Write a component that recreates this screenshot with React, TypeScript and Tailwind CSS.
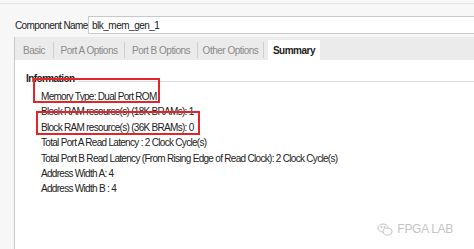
import React from "react";

const lines = [
  "Memory Type: Dual Port ROM",
  "Block RAM resource(s) (18K BRAMs): 1",
  "Block RAM resource(s) (36K BRAMs): 0",
  "Total Port A Read Latency : 2 Clock Cycle(s)",
  "Total Port B Read Latency (From Rising Edge of Read Clock): 2 Clock Cycle(s)",
  "Address Width A: 4",
  "Address Width B : 4",
];

const tabs = [
  { label: "Basic", w: "w-[39px]" },
  { label: "Port A Options", w: "w-[71px]" },
  { label: "Port B Options", w: "w-[73px]" },
  { label: "Other Options", w: "w-[66px]" },
];

function WatermarkIcon() {
  return (
    <svg width="16" height="13" viewBox="0 0 16 13" fill="none" stroke="#c4c4c4" strokeWidth="1">
      <ellipse cx="6" cy="5" rx="5" ry="4" />
      <ellipse cx="10.5" cy="8.5" rx="4.5" ry="3.5" fill="#fff" />
      <circle cx="4.5" cy="4" r="0.6" fill="#c4c4c4" />
      <circle cx="7.5" cy="4" r="0.6" fill="#c4c4c4" />
    </svg>
  );
}

export default function App() {
  return (
    <div
      className="w-[474px] h-[249px] overflow-hidden bg-[#f7f7f7] relative text-[#222]"
      style={{ fontFamily: '"Liberation Sans", Arial, sans-serif' }}
    >
      <div className="h-[3px]" />
      <div className="h-px bg-[#e4e4e4]" />
      <div className="h-[12px]" />
      {/* component name row */}
      <div className="flex items-center h-[18px] pl-[15px]">
        <span className="text-[10px] tracking-[-0.6px] w-[73px] whitespace-nowrap">Component Name</span>
        <div className="flex-1 h-[18px] bg-white border-t border-b border-l border-[#c9c9c9] flex items-center pl-[3px] text-[10px] tracking-[-0.5px]">
          blk_mem_gen_1
        </div>
      </div>
      <div className="h-[3px]" />
      {/* tabs + panel */}
      <div className="ml-[14px] border-l border-[#c8c8c8] bg-white h-[220px] flex flex-col">
        <div className="h-[23px] bg-[#ebebeb] flex items-end text-[10px] text-[#8a8a8a] tracking-[-0.5px]">
          {tabs.map((t) => (
            <div key={t.label} className={`flex items-center h-[20px] ${t.w}`}>
              <span className="flex-1 text-center whitespace-nowrap">{t.label}</span>
              <span className="w-px h-[16px] bg-[#cfcfcf]" />
            </div>
          ))}
          <div className="h-[20px] w-[52px] ml-[4px] bg-white flex items-center justify-center font-bold text-[#222]">
            Summary
          </div>
        </div>
        <div className="flex items-center mt-[11px] pl-[11px]">
          <span className="text-[10px] font-bold tracking-[-0.6px]">Information</span>
          <div className="flex-1 h-px bg-[#dcdcdc] ml-[4px] mt-[6px]" />
        </div>
        <div className="pl-[26px] pt-[3px] flex flex-col text-[10px] tracking-[-0.7px] leading-[15.4px] relative whitespace-nowrap">
          {lines.map((l) => (
            <div key={l}>{l}</div>
          ))}
          <div className="absolute left-[18px] top-[-8px] w-[127px] h-[25px] border-2 border-[#e3242b]" />
          <div className="absolute left-[21px] top-[25px] w-[164px] h-[24px] border-2 border-[#e3242b]" />
        </div>
        <div className="flex-1" />
        <div className="flex items-center justify-end pr-[21px] pb-[19px] gap-[4px] text-[#c4c4c4] text-[12px] tracking-[-0.3px]">
          <WatermarkIcon />
          <span>FPGA LAB</span>
        </div>
      </div>
    </div>
  );
}
